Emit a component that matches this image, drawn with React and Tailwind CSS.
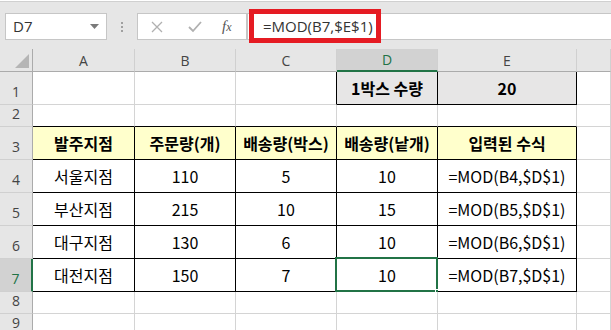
import React from 'react';

const cols = ['A', 'B', 'C', 'D', 'E', ''];

const rows = [
  { n: 1, h: 'h-[33px]' },
  { n: 2, h: 'h-[22px]' },
  { n: 3, h: 'h-[33px]' },
  { n: 4, h: 'h-[33px]' },
  { n: 5, h: 'h-[33px]' },
  { n: 6, h: 'h-[33px]' },
  { n: 7, h: 'h-[33px]' },
  { n: 8, h: 'h-[22px]' },
  { n: 9, h: 'h-[22px]' },
];

const data = [
  ['서울지점', '110', '5', '10', '=MOD(B4,$D$1)'],
  ['부산지점', '215', '10', '15', '=MOD(B5,$D$1)'],
  ['대구지점', '130', '6', '10', '=MOD(B6,$D$1)'],
  ['대전지점', '150', '7', '10', '=MOD(B7,$D$1)'],
];

const heads = ['발주지점', '주문량(개)', '배송량(박스)', '배송량(낱개)', '입력된 수식'];

function cellContent(r, c) {
  if (r === 1 && c === 3) return { text: '1박스 수량', bold: true, bg: 'bg-[#e7e6e6]' };
  if (r === 1 && c === 4) return { text: '20', bold: true, bg: 'bg-[#e7e6e6]' };
  if (r === 3 && c < 5) return { text: heads[c], bold: true, bg: 'bg-[#ffffcc]' };
  if (r >= 4 && r <= 7 && c < 5) return { text: data[r - 4][c] };
  return { text: '' };
}

function borderClasses(r, c) {
  let right = 'border-r-[#d4d4d4]';
  if (r >= 3 && r <= 7 && c < 5) right = 'border-r-black';
  if (r === 1 && c >= 2 && c <= 4) right = 'border-r-black';
  let bottom = 'border-b-[#d4d4d4]';
  if (r >= 2 && r <= 7 && c < 5) bottom = 'border-b-black';
  if (r === 1 && (c === 3 || c === 4)) bottom = 'border-b-black';
  return `border-r border-b ${right} ${bottom}`;
}

function Cell({ r, c }) {
  const { text, bold, bg } = cellContent(r, c);
  const selected = r === 7 && c === 3;
  return (
    <div
      className={`relative flex items-center justify-center text-[16px] text-black ${bold ? 'font-bold' : ''} ${bg || 'bg-white'} ${borderClasses(r, c)}`}
    >
      <span className="leading-none">{text}</span>
      {selected && (
        <>
          <div className="absolute top-[-2px] left-[-2px] right-[-1px] bottom-[-1px] border-2 border-[#217346]" />
          <div className="absolute right-[-4px] bottom-[-4px] w-[6px] h-[6px] bg-[#217346] border border-white" />
        </>
      )}
    </div>
  );
}

export default function App() {
  return (
    <div
      className="w-[611px] h-[330px] overflow-hidden bg-white relative"
      style={{ fontFamily: '"Noto Sans CJK KR", "Noto Sans", sans-serif' }}
    >
      {/* formula bar */}
      <div className="h-[48px] bg-[#e6e6e6] border-t border-[#d0d0d0] mt-[1px] flex items-start pt-[11px] relative">
        <div className="ml-[5px] w-[102px] h-[27px] bg-white border border-[#c6c6c6] flex items-center justify-between pl-[7px] pr-[7px]">
          <span className="text-[15px] text-[#333]" style={{ fontFamily: '"Open Sans", sans-serif' }}>D7</span>
          <svg width="9" height="5" viewBox="0 0 9 5"><path d="M0 0 L9 0 L4.5 5 Z" fill="#7a7a7a" /></svg>
        </div>
        <div className="w-[30px] h-[27px] flex flex-col items-center justify-center gap-[2px]">
          <div className="w-[2px] h-[2px] bg-[#a0a0a0]" />
          <div className="w-[2px] h-[2px] bg-[#a0a0a0]" />
          <div className="w-[2px] h-[2px] bg-[#a0a0a0]" />
        </div>
        <div className="w-[110px] h-[27px] bg-white border border-[#c6c6c6] flex items-center pl-[13px]">
          <svg width="12" height="12" viewBox="0 0 12 12"><path d="M1 1 L11 11 M11 1 L1 11" stroke="#b0b0b0" strokeWidth="1.3" /></svg>
          <svg className="ml-[25px]" width="14" height="12" viewBox="0 0 14 12"><path d="M1 6 L5 10 L13 1" stroke="#b0b0b0" strokeWidth="1.8" fill="none" /></svg>
          <span className="ml-[20px] text-[15px] italic text-[#555]" style={{ fontFamily: '"Liberation Serif", serif' }}>
            f<span className="text-[12px]">x</span>
          </span>
        </div>
        <div className="flex-1 h-[27px] bg-white border border-[#c6c6c6] border-r-0 flex items-center pl-[15px]">
          <span className="text-[15px] text-[#333] leading-none" style={{ fontFamily: '"Open Sans", sans-serif' }}>=MOD(B7,$E$1)</span>
        </div>
        <div className="absolute left-[249px] top-[7px] w-[132px] h-[34px] border-[5px] border-[#e51b23]" />
      </div>

      {/* sheet */}
      <div className="grid grid-cols-[33px_102px_101px_101px_101px_139px_1fr]">
        <div className="h-[23px] bg-[#e6e6e6] border-r border-b border-[#ababab] relative">
          <svg className="absolute right-[3px] bottom-[3px]" width="14" height="14" viewBox="0 0 14 14"><path d="M14 0 L14 14 L0 14 Z" fill="#b5b5b5" /></svg>
        </div>
        {cols.map((c, i) => (
          <div
            key={i}
            className={`h-[23px] flex items-center justify-center text-[14px] border-r border-[#d0d0d0] ${
              c === 'D' ? 'bg-[#d2d2d2] text-[#217346] border-b-2 border-b-[#217346]' : 'bg-[#e6e6e6] text-[#444] border-b border-b-[#ababab]'
            }`}
            style={{ fontFamily: '"Open Sans", sans-serif' }}
          >
            {c}
          </div>
        ))}
        {rows.map((row) => (
          <React.Fragment key={row.n}>
            <div
              className={`${row.h} flex items-end justify-center pb-[2px] text-[14px] border-b border-[#d0d0d0] ${
                row.n === 7 ? 'bg-[#d2d2d2] text-[#217346] border-r-2 border-r-[#217346]' : 'bg-[#e6e6e6] text-[#444] border-r border-r-[#ababab]'
              }`}
              style={{ fontFamily: '"Open Sans", sans-serif' }}
            >
              {row.n}
            </div>
            {[0, 1, 2, 3, 4, 5].map((c) => (
              <div key={c} className={`${row.h} grid`}>
                <Cell r={row.n} c={c} />
              </div>
            ))}
          </React.Fragment>
        ))}
      </div>
    </div>
  );
}
